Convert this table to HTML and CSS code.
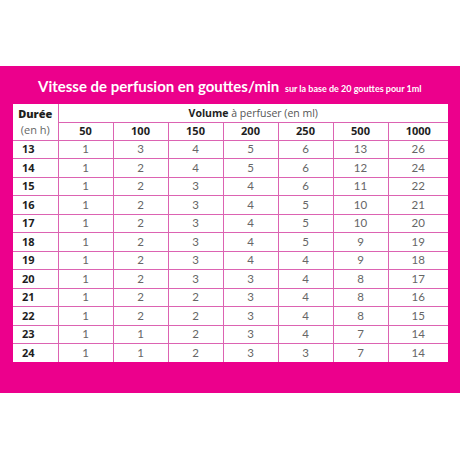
FILE: index.html
```html
<!DOCTYPE html>
<html lang="fr">
<head>
<meta charset="utf-8">
<link rel="stylesheet" href="styles.css">
</head>
<body>
<section class="card">
  <h1 class="title">Vitesse de perfusion en gouttes/min <span class="sub">sur la base de 20 gouttes pour 1ml</span></h1>
  <table class="grid">
    <colgroup>
      <col class="c-first"><col class="c-v"><col class="c-v"><col class="c-v"><col class="c-v"><col class="c-v"><col class="c-v"><col class="c-last">
    </colgroup>
    <thead>
      <tr class="h1">
        <th rowspan="2" class="dur"><b>Durée</b><span>(en h)</span></th>
        <th colspan="7" class="vol"><b>Volume</b> à perfuser (en ml)</th>
      </tr>
      <tr class="h2">
        <th>50</th><th>100</th><th>150</th><th>200</th><th>250</th><th>500</th><th>1000</th>
      </tr>
    </thead>
    <tbody>
      <tr><th>13</th><td>1</td><td>3</td><td>4</td><td>5</td><td>6</td><td>13</td><td>26</td></tr>
      <tr><th>14</th><td>1</td><td>2</td><td>4</td><td>5</td><td>6</td><td>12</td><td>24</td></tr>
      <tr><th>15</th><td>1</td><td>2</td><td>3</td><td>4</td><td>6</td><td>11</td><td>22</td></tr>
      <tr><th>16</th><td>1</td><td>2</td><td>3</td><td>4</td><td>5</td><td>10</td><td>21</td></tr>
      <tr><th>17</th><td>1</td><td>2</td><td>3</td><td>4</td><td>5</td><td>10</td><td>20</td></tr>
      <tr><th>18</th><td>1</td><td>2</td><td>3</td><td>4</td><td>5</td><td>9</td><td>19</td></tr>
      <tr><th>19</th><td>1</td><td>2</td><td>3</td><td>4</td><td>4</td><td>9</td><td>18</td></tr>
      <tr><th>20</th><td>1</td><td>2</td><td>3</td><td>3</td><td>4</td><td>8</td><td>17</td></tr>
      <tr><th>21</th><td>1</td><td>2</td><td>2</td><td>3</td><td>4</td><td>8</td><td>16</td></tr>
      <tr><th>22</th><td>1</td><td>2</td><td>2</td><td>3</td><td>4</td><td>8</td><td>15</td></tr>
      <tr><th>23</th><td>1</td><td>1</td><td>2</td><td>3</td><td>4</td><td>7</td><td>14</td></tr>
      <tr><th>24</th><td>1</td><td>1</td><td>2</td><td>3</td><td>3</td><td>7</td><td>14</td></tr>
    </tbody>
  </table>
</section>
</body>
</html>
```
FILE: styles.css
```css
html, body {
  margin: 0;
  padding: 0;
  background: #ffffff;
}
body {
  width: 460px;
  height: 460px;
  font-family: "Open Sans", "Liberation Sans", sans-serif;
}
.card {
  margin-top: 66px;
  height: 327px;
  background: #ec008c;
  padding: 10px 12px 0 13px;
  box-sizing: border-box;
}
.title {
  margin: 0 0 8px 25px;
  height: 20px;
  line-height: 20px;
  color: #ffffff;
  font-family: "Lato", "Open Sans", sans-serif;
  font-size: 15px;
  font-weight: 700;
  white-space: nowrap;
}
.sub {
  font-size: 9px;
  font-weight: 700;
  margin-left: 2px;
}
.grid {
  width: 435px;
  border-collapse: collapse;
  table-layout: fixed;
  background: #ffffff;
  font-size: 11px;
}
.c-first { width: 45px; }
.c-v { width: 55px; }
.c-last { width: 60px; }
.grid th, .grid td {
  border: 1px solid #dc63b2;
  padding: 0;
  text-align: center;
  line-height: 16px;
}
.grid tr:first-child th { border-top: none; }
.grid th:first-child { border-left: none; }
.grid th:last-child, .grid td:last-child { border-right: none; }
.grid tbody tr:last-child th, .grid tbody tr:last-child td { border-bottom: none; }
.grid thead tr { height: 18px; }
.grid tbody tr { height: 18.5px; }
.grid th {
  font-weight: 700;
  color: #1e1e1e;
}
.grid td {
  font-weight: 400;
  color: #666666;
  font-family: "Lato", "Open Sans", sans-serif;
  font-size: 11.5px;
}
.grid tbody th {
  text-align: left;
  padding-left: 9px;
}
.dur {
  vertical-align: top;
  line-height: 16px;
  padding-top: 2px !important;
}
.dur b, .dur span { display: block; }
.dur span {
  font-weight: 400;
  color: #666666;
}
.vol {
  font-weight: 400 !important;
  color: #555555 !important;
  font-size: 10.5px;
}
.vol b {
  font-weight: 700;
  color: #1e1e1e;
}
```
